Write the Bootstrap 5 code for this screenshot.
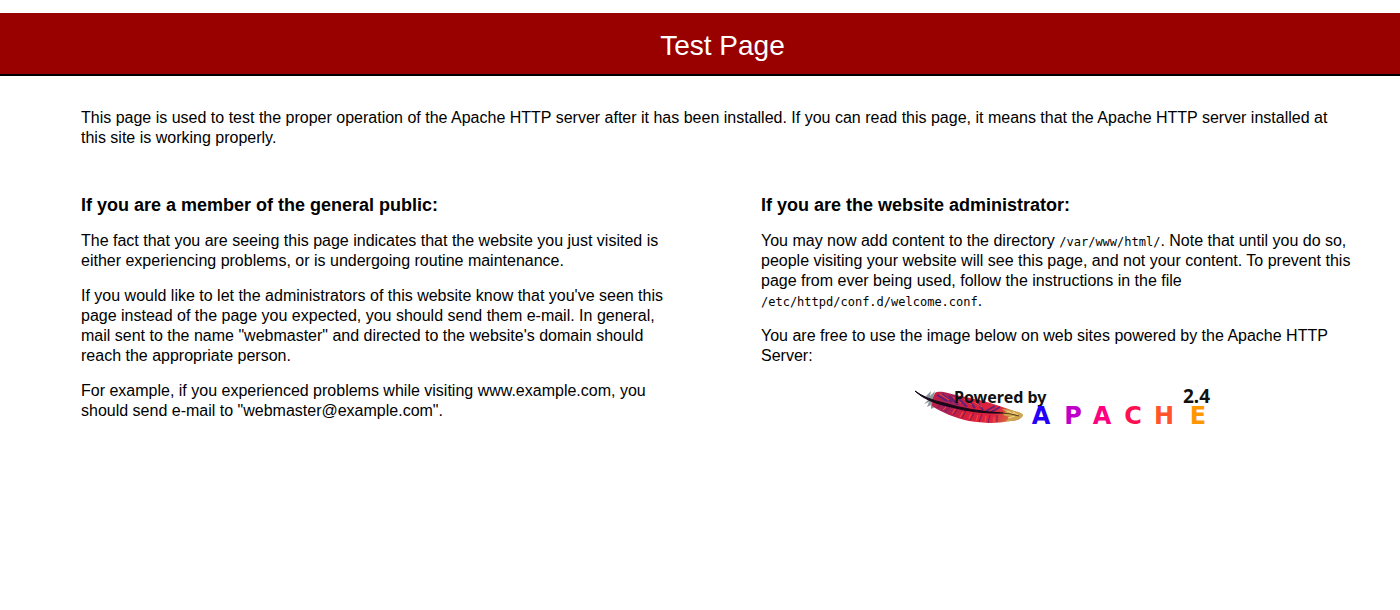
<!DOCTYPE html>
<html lang="en">
<head>
<meta charset="utf-8">
<meta name="viewport" content="width=device-width, initial-scale=1">
<title>Test Page for the Apache HTTP Server</title>
<link href="https://cdn.jsdelivr.net/npm/bootstrap@5.3.0/dist/css/bootstrap.min.css" rel="stylesheet">
<style>
  body {
    font-family: "Liberation Sans", Arial, sans-serif;
    font-size: 16px;
    line-height: 20px;
    color: #000;
    background: #fff;
  }
  p { margin-bottom: 15px; }
  h2 { font-size: 18px; line-height: 20px; margin-bottom: 16px; }
  code { font-family: "DejaVu Sans Mono", monospace; font-size: 12px; line-height: 16px; color: #000; }
  .banner {
    margin-top: 13px;
    padding: 15px 0 10px 45px;
    background: #900;
    border-bottom: 2px solid #000;
  }
  .banner h1 { font-size: 28px; line-height: 36px; }
  .page-body { padding: 32px 16px; }
  .audiences { gap: 32px; margin-top: 47px; }
  .powered { max-width: 100%; }
  @media (min-width: 768px) {
    .page-body { padding-left: 81px; padding-right: 37px; }
    .audiences { grid-template-columns: 1fr 1fr; gap: 78px; }
  }
</style>
</head>
<body>
<header class="banner text-center text-white">
  <h1 class="fw-normal mb-0">Test Page</h1>
</header>
<main class="container-fluid page-body">
  <p class="pe-3">This page is used to test the proper operation of the Apache HTTP server after it has been installed. If you can read this page, it means that the Apache HTTP server installed at this site is working properly.</p>
  <div class="audiences d-grid">
    <section>
      <h2 class="fw-bold">If you are a member of the general public:</h2>
      <p>The fact that you are seeing this page indicates that the website you just visited is either experiencing problems, or is undergoing routine maintenance.</p>
      <p>If you would like to let the administrators of this website know that you've seen this page instead of the page you expected, you should send them e-mail. In general, mail sent to the name "webmaster" and directed to the website's domain should reach the appropriate person.</p>
      <p>For example, if you experienced problems while visiting www.example.com, you should send e-mail to "webmaster@example.com".</p>
    </section>
    <section>
      <h2 class="fw-bold">If you are the website administrator:</h2>
      <p>You may now add content to the directory <code class="text-nowrap">/var/www/html/</code>. Note that until you do so, people visiting your website will see this page, and not your content. To prevent this page from ever being used, follow the instructions in the file <code class="text-nowrap">/etc/httpd/conf.d/welcome.conf</code>.</p>
      <p>You are free to use the image below on web sites powered by the Apache HTTP Server:</p>
      <div class="text-center">
        <svg class="powered" width="300" height="52" viewBox="0 -6 300 52" role="img" aria-label="Powered by Apache 2.4">
          <defs>
            <linearGradient id="vane" x1="0" x2="1" y1="0" y2="0.2">
              <stop offset="0" stop-color="#c8203c"/><stop offset=".25" stop-color="#a5205a"/>
              <stop offset=".5" stop-color="#d5203c"/><stop offset=".8" stop-color="#e02440"/>
              <stop offset="1" stop-color="#d86a40"/>
            </linearGradient>
          </defs>
          <path d="M14 9l5-5-1 5 5-5-2 7 3-1-1 10-4 2v-4l-4 2 2-5-5 2 4-4z" fill="#8d989e"/>
          <path d="M23 6C26 4 31 5 36 6C51 10 66 12 78 16C86 18 93 21 102 24Q111 27 110 29Q108 34 98 34C84 37 70 36 57 34C43 31 29 25 20 19Q20 11 23 6Z" fill="url(#vane)"/>
          <path d="M25 8l10 6M30 7l10 8M37 9l9 9M46 11l9 9M56 13l7 8M65 15l6 8M83 19l-9 5M88 20l-9 5" stroke="#632078" stroke-width="2" fill="none"/>
          <path d="M30 17l-5 4M38 20l-5 5M46 22l-5 6M54 24l-4 7M62 26l-4 7M70 27l-3 8M78 28l-2 8M85 28v7" stroke="#7d1958" fill="none"/>
          <path d="M28 7l9 6M41 10l8 6M52 12l8 6M62 15l8 5M34 20l-3 3M43 22l-3 5M51 25l-3 5M59 27l-2 5M66 28l-2 6M74 29l-1 6M82 30v5" stroke="#ff4938" fill="none"/>
          <path d="M90 22Q99 22 109 26Q113 28 109 31Q102 35 94 34L98 30L91 28L94 25Z" fill="#cda54f"/>
          <path d="M95 24l7 3M96 31l7-2M101 25l5 3" stroke="#f4d980"/>
          <path d="M3 4Q14 12 32 16Q58 24 91 26Q65 27 39 20Q14 15 3 4Z" fill="#160818" stroke="#160818"/>
          <path d="M88 26Q98 26 107 29" fill="none" stroke="#5b3b20"/>
          <g font-family="'Noto Sans', 'Open Sans', sans-serif" font-size="16" font-weight="700" fill="#111">
            <text x="42" y="16">Powered by</text>
            <text x="298" y="16" font-size="19" text-anchor="end">2.4</text>
          </g>
          <text y="37" font-family="'DejaVu Sans', sans-serif" font-size="24" font-weight="700" text-anchor="middle"><tspan x="129" fill="#2500f8">A</tspan><tspan x="161" fill="#c000c8">P</tspan><tspan x="190" fill="#ff0080">A</tspan><tspan x="221" fill="#ff1050">C</tspan><tspan x="252" fill="#ff542c">H</tspan><tspan x="286" fill="#ff9800">E</tspan></text>
        </svg>
      </div>
    </section>
  </div>
</main>
<script src="https://cdn.jsdelivr.net/npm/bootstrap@5.3.0/dist/js/bootstrap.bundle.min.js"></script>
</body>
</html>
